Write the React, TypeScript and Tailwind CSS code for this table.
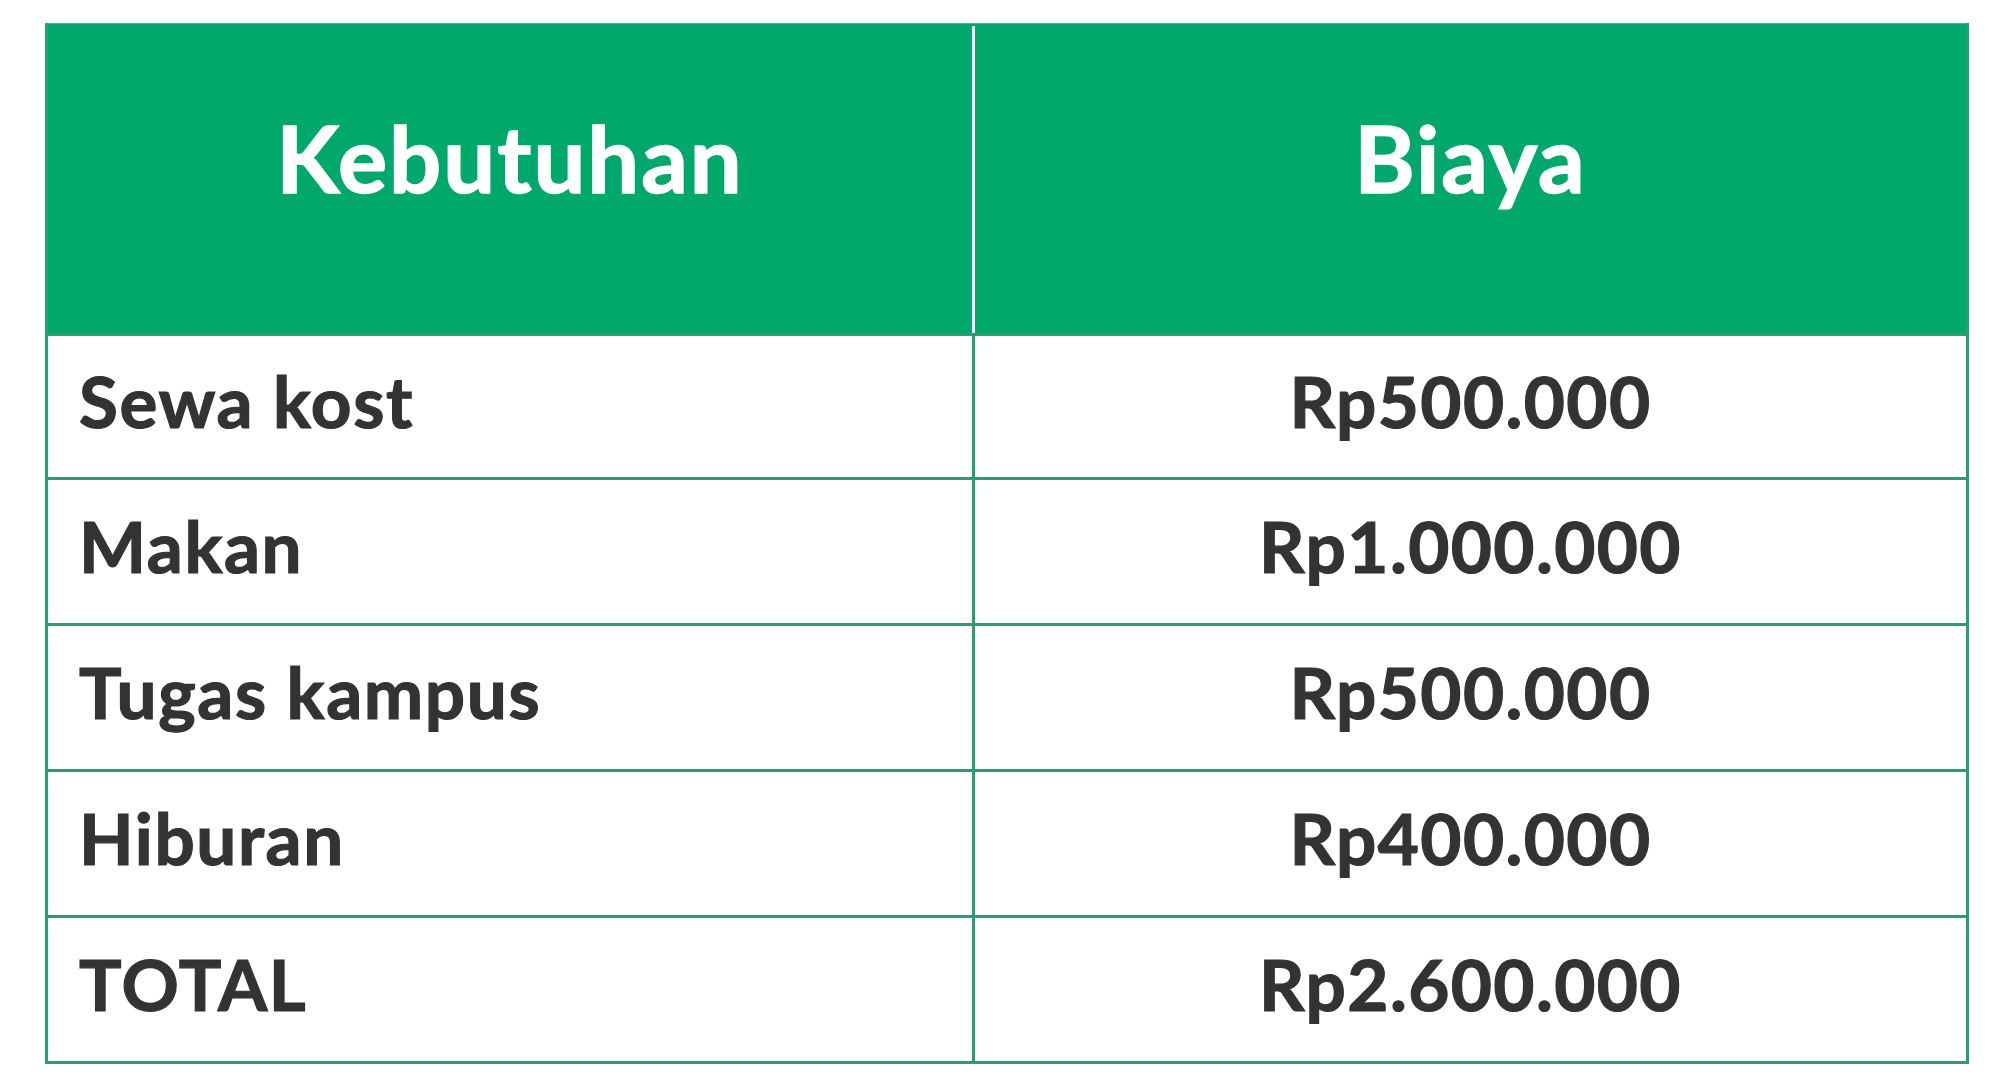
import React from "react";

const rows = [
  { k: "Sewa kost", v: "Rp500.000" },
  { k: "Makan", v: "Rp1.000.000" },
  { k: "Tugas kampus", v: "Rp500.000" },
  { k: "Hiburan", v: "Rp400.000" },
  { k: "TOTAL", v: "Rp2.600.000" },
];

export default function App() {
  return (
    <div className="w-[2000px] h-[1091px] bg-white pl-[45px] pt-[23px]" style={{ fontFamily: "Lato, 'Liberation Sans', sans-serif" }}>
      <div className="w-[1924px] border-x-[3px] border-[#23a077]">
        <div className="flex h-[310px] bg-[#00a86b] border-t border-[#3cc08f]">
          <div className="w-[924px] flex items-center justify-center pb-[42px] text-white font-bold text-[92px] leading-none tracking-[2px] [-webkit-text-stroke:1.5px_#ffffff]">
            Kebutuhan
          </div>
          <div className="w-[3px] bg-white mt-[2px]" />
          <div className="flex-1 flex items-center justify-center pb-[42px] text-white font-bold text-[92px] leading-none tracking-[2px] [-webkit-text-stroke:1.5px_#ffffff]">
            Biaya
          </div>
        </div>
        {rows.map((r, i) => (
          <div key={i} className={`flex border-[#23a077] ${i === 0 ? "border-y-[3px] h-[147px]" : "border-b-[3px] h-[146px]"}`}>
            <div className="w-[927px] border-r-[3px] border-[#23a077] flex items-center pl-[31px] pb-[12px] text-[#333333] font-bold text-[71px] leading-none tracking-[1.6px] [-webkit-text-stroke:1.2px_#333333]">
              {r.k}
            </div>
            <div className="flex-1 flex items-center justify-center pb-[12px] text-[#333333] font-bold text-[71px] leading-none tracking-[1.4px] [-webkit-text-stroke:1.2px_#333333]">
              {r.v}
            </div>
          </div>
        ))}
      </div>
    </div>
  );
}
